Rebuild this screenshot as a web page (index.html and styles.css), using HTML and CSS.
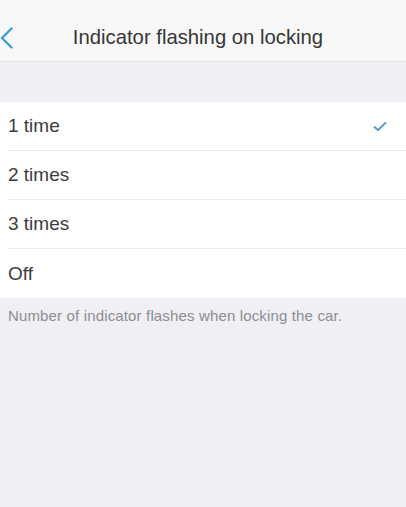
FILE: index.html
```html
<!DOCTYPE html>
<html>
<head>
<meta charset="utf-8">
<link rel="stylesheet" href="styles.css">
</head>
<body>
<div class="screen">
  <header class="nav">
    <svg class="back" width="14" height="22" viewBox="0 0 14 22"><path d="M11.5 1.5 L2 11 L11.5 20.5" fill="none" stroke="#3d9fd6" stroke-width="2.4" stroke-linecap="round" stroke-linejoin="round"/></svg>
    <div class="title">Indicator flashing on locking</div>
  </header>
  <div class="gap"></div>
  <ul class="list">
    <li class="row"><span>1 time</span><svg class="check" width="14" height="11" viewBox="0 0 14 11"><path d="M1.5 6 L5 9.2 L12.5 1.8" fill="none" stroke="#4f95c4" stroke-width="1.8" stroke-linecap="round" stroke-linejoin="round"/></svg></li>
    <li class="row"><span>2 times</span></li>
    <li class="row"><span>3 times</span></li>
    <li class="row"><span>Off</span></li>
  </ul>
  <p class="note">Number of indicator flashes when locking the car.</p>
</div>
</body>
</html>
```
FILE: styles.css
```css
* { box-sizing: border-box; }
html, body { margin: 0; padding: 0; }
body {
  width: 406px;
  height: 507px;
  background: #efeff4;
  font-family: "Liberation Sans", Arial, sans-serif;
  overflow: hidden;
}
.screen { display: flex; flex-direction: column; }
.nav {
  height: 62px;
  padding-top: 14px;
  background: #f8f8f9;
  border-bottom: 1px solid #e2e2e6;
  display: flex;
  align-items: center;
  justify-content: center;
  position: relative;
}
.back { position: absolute; left: 0; top: 27px; }
.title {
  font-size: 20.3px;
  color: #363636;
  margin-right: 10px;
}
.gap { height: 40px; }
.list {
  list-style: none;
  margin: 0;
  padding: 0 0 0 8px;
  background: #ffffff;
}
.row {
  height: 49px;
  display: flex;
  align-items: center;
  justify-content: space-between;
  padding-right: 19px;
  border-bottom: 1px solid #ececef;
  font-size: 19px;
  color: #3c3c3c;
}
.row:last-child { border-bottom: none; }
.note {
  margin: 0;
  padding: 9px 8px;
  font-size: 15px;
  letter-spacing: 0.15px;
  color: #8d8d92;
}
```
